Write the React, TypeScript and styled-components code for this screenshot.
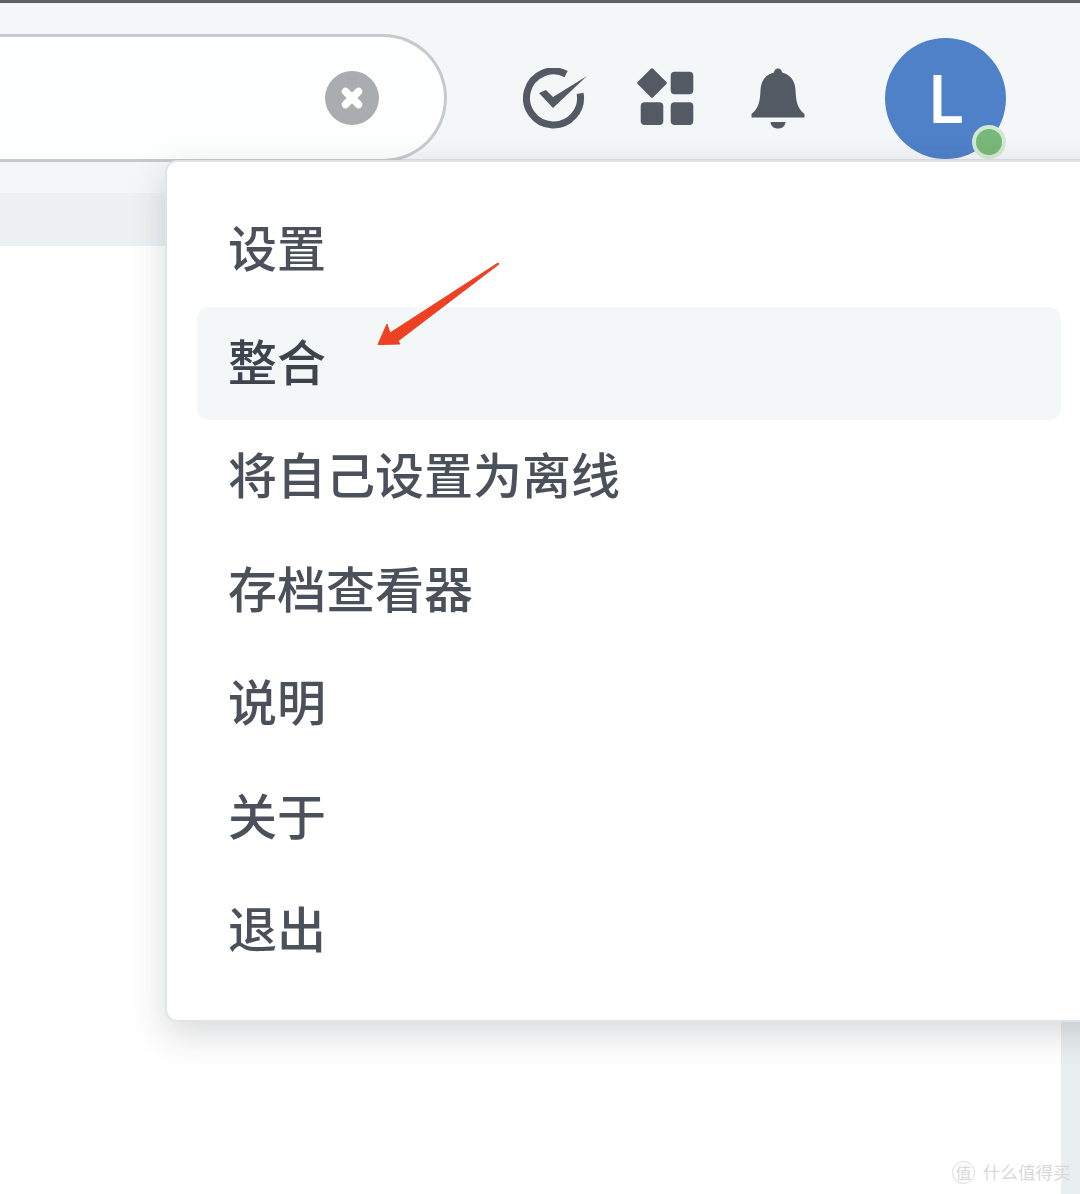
import React from "react";
import styled, { createGlobalStyle } from "styled-components";

const Global = createGlobalStyle`
  html, body { margin: 0; padding: 0; background: #fff; }
  * { box-sizing: border-box; }
`;

const Page = styled.div`
  position: relative;
  width: 1080px;
  height: 1194px;
  overflow: hidden;
  display: flex;
  flex-direction: column;
  background: #fff;
  font-family: "Noto Sans CJK SC", "Liberation Sans", sans-serif;
`;

const TopStrip = styled.div`
  height: 3px;
  flex: none;
  background: #5f6064;
`;

const Header = styled.header`
  height: 159px;
  flex: none;
  display: flex;
  align-items: flex-start;
  background: #f4f7f8;
  border-bottom: 3px solid #dde2e6;
`;

const SearchPill = styled.div`
  width: 447px;
  height: 128px;
  margin-top: 31px;
  flex: none;
  display: flex;
  align-items: center;
  justify-content: flex-end;
  padding-right: 65px;
  background: #fdfefe;
  border: 3px solid #c6c9cd;
  border-left: none;
  border-radius: 0 64px 64px 0;
`;

const ClearButton = styled.div`
  width: 54px;
  height: 54px;
  border-radius: 50%;
  background: #a9acb1;
  display: flex;
  align-items: center;
  justify-content: center;
`;

const IconGroup = styled.div`
  display: flex;
  align-items: center;
  margin-top: 65px;
  margin-left: 76px;
`;

const IconSlot = styled.div<{ $width: number; $gap: number }>`
  width: ${(p) => p.$width}px;
  margin-right: ${(p) => p.$gap}px;
  height: 62px;
  display: flex;
  align-items: center;
  justify-content: center;
`;

const Avatar = styled.div`
  position: relative;
  width: 121px;
  height: 121px;
  margin-top: 35px;
  margin-left: 80px;
  border-radius: 50%;
  background: #4f81c9;
  color: #fff;
  font-family: "Open Sans", "Liberation Sans", sans-serif;
  font-size: 67px;
  font-weight: 600;
  line-height: 118px;
  text-align: center;
`;

const Status = styled.span`
  position: absolute;
  right: 0;
  bottom: 0;
  width: 34px;
  height: 34px;
  border-radius: 50%;
  background: #78b878;
  border: 4px solid #d3e8d3;
`;

const SubBar = styled.div`
  height: 31px;
  flex: none;
  background: #f4f7f8;
`;

const TabBar = styled.div`
  height: 53px;
  flex: none;
  background: #edf1f4;
`;

const Body = styled.div`
  flex: 1;
  display: flex;
`;

const Main = styled.main`
  flex: 1;
  background: #fff;
`;

const ScrollTrack = styled.div`
  width: 19px;
  flex: none;
  background: #e9eef0;
`;

const Menu = styled.nav`
  position: absolute;
  left: 165px;
  top: 160px;
  width: 960px;
  height: 862px;
  padding: 31px 62px 32px 30px;
  background: #fff;
  border: 2px solid #dfe4e9;
  border-radius: 12px;
  box-shadow: 0 12px 36px rgba(40, 45, 55, 0.18);
  display: flex;
  flex-direction: column;
`;

const MenuItem = styled.div<{ $active?: boolean }>`
  height: 113.5px;
  flex: none;
  display: flex;
  align-items: center;
  padding: 0 0 8px 31px;
  font-size: 49px;
  font-weight: 500;
  color: ${(p) => (p.$active ? "#3d444d" : "#4a515a")};
  background: ${(p) => (p.$active ? "#f4f7f8" : "transparent")};
  border-radius: 12px;
  white-space: nowrap;
`;

const ArrowMark = styled.svg`
  position: absolute;
  left: 370px;
  top: 258px;
  width: 136px;
  height: 92px;
`;

const Watermark = styled.div`
  position: absolute;
  left: 952px;
  top: 1160px;
  display: flex;
  align-items: center;
  gap: 8px;
  color: #d9d9d9;
  font-size: 17.5px;
  line-height: 24px;
  white-space: nowrap;
`;

const WatermarkBadge = styled.span`
  width: 23px;
  height: 23px;
  border-radius: 50%;
  border: 1px solid #dcdcdc;
  font-size: 16px;
  line-height: 20px;
  text-align: center;
`;

const ITEMS = ["设置", "整合", "将自己设置为离线", "存档查看器", "说明", "关于", "退出"];

export default function App() {
  return (
    <Page>
      <Global />
      <TopStrip />
      <Header>
        <SearchPill>
          <ClearButton>
            <svg width="30" height="30" viewBox="0 0 30 30">
              <path d="M8.5 8.5 L21.5 21.5 M21.5 8.5 L8.5 21.5" stroke="#fff" strokeWidth="7.5" strokeLinecap="round" />
            </svg>
          </ClearButton>
        </SearchPill>
        <IconGroup>
          <IconSlot $width={64} $gap={50}>
            <svg width="64" height="62" viewBox="0 0 64 62">
              <path d="M43.1 6.1 A27 27 0 1 0 57.1 25.3" fill="none" stroke="#535a64" strokeWidth="7" />
              <path d="M16 25 L23 22 L30 29 L64 8 L30 40 Z" fill="#535a64" />
            </svg>
          </IconSlot>
          <IconSlot $width={60} $gap={54}>
            <svg width="60" height="62" viewBox="0 0 60 62">
              <path d="M15 1.5 L28.5 15 L15 28.5 L1.5 15 Z" fill="#535a64" stroke="#535a64" strokeWidth="2.5" strokeLinejoin="round" />
              <rect x="33.7" y="3.7" width="22.6" height="22.6" rx="4" fill="#535a64" />
              <rect x="3.7" y="34.3" width="22.6" height="22.6" rx="4" fill="#535a64" />
              <rect x="33.7" y="34.3" width="22.6" height="22.6" rx="4" fill="#535a64" />
            </svg>
          </IconSlot>
          <IconSlot $width={54} $gap={0}>
            <svg width="54" height="62" viewBox="0 0 54 62">
              <path d="M27 0.5 C24.5 0.5 23 2.5 23 4.5 C14 7 10 13 9.5 22 C9 33 8 40 0.5 46 L0.5 49.5 L53.5 49.5 L53.5 46 C46 40 45 33 44.5 22 C44 13 40 7 31 4.5 C31 2.5 29.5 0.5 27 0.5 Z" fill="#535a64" />
              <path d="M19.5 54 L34.5 54 C34 58.5 31 60.5 27 60.5 C23 60.5 20 58.5 19.5 54 Z" fill="#535a64" />
            </svg>
          </IconSlot>
        </IconGroup>
        <Avatar>
          L
          <Status />
        </Avatar>
      </Header>
      <SubBar />
      <TabBar />
      <Body>
        <Main />
        <ScrollTrack />
      </Body>
      <Menu>
        {ITEMS.map((label, i) => (
          <MenuItem key={label} $active={i === 1}>
            {label}
          </MenuItem>
        ))}
      </Menu>
      <ArrowMark viewBox="0 0 136 92">
        <path d="M129 6 L28 83 L30 86 L8 86.5 L17 66 L20 75 L128 5 Z" fill="#ee4123" stroke="#ee4123" strokeWidth="1" strokeLinejoin="round" />
      </ArrowMark>
      <Watermark>
        <WatermarkBadge>值</WatermarkBadge>
        什么值得买
      </Watermark>
    </Page>
  );
}
